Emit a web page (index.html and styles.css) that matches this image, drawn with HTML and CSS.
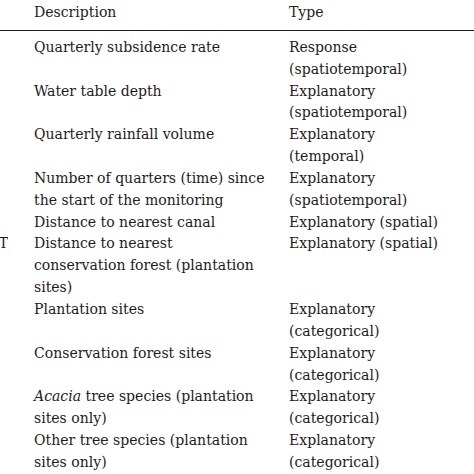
FILE: index.html
```html
<!DOCTYPE html>
<html>
<head>
<meta charset="utf-8">
<link rel="stylesheet" href="styles.css">
</head>
<body>
<div class="table">
  <div class="head">
    <div class="c0"></div>
    <div class="c1">Description</div>
    <div class="c2">Type</div>
  </div>
  <div class="body">
    <div class="c0"></div>
    <div class="c1">Quarterly subsidence rate</div>
    <div class="c2">Response<br>(spatiotemporal)</div>

    <div class="c0"></div>
    <div class="c1">Water table depth</div>
    <div class="c2">Explanatory<br>(spatiotemporal)</div>

    <div class="c0"></div>
    <div class="c1">Quarterly rainfall volume</div>
    <div class="c2">Explanatory<br>(temporal)</div>

    <div class="c0"></div>
    <div class="c1">Number of quarters (time) since<br>the start of the monitoring</div>
    <div class="c2">Explanatory<br>(spatiotemporal)</div>

    <div class="c0"></div>
    <div class="c1">Distance to nearest canal</div>
    <div class="c2">Explanatory (spatial)</div>

    <div class="c0"><span class="clip">T</span></div>
    <div class="c1">Distance to nearest<br>conservation forest (plantation<br>sites)</div>
    <div class="c2">Explanatory (spatial)</div>

    <div class="c0"></div>
    <div class="c1">Plantation sites</div>
    <div class="c2">Explanatory<br>(categorical)</div>

    <div class="c0"></div>
    <div class="c1">Conservation forest sites</div>
    <div class="c2">Explanatory<br>(categorical)</div>

    <div class="c0"></div>
    <div class="c1"><i>Acacia</i> tree species (plantation<br>sites only)</div>
    <div class="c2">Explanatory<br>(categorical)</div>

    <div class="c0"></div>
    <div class="c1">Other tree species (plantation<br>sites only)</div>
    <div class="c2">Explanatory<br>(categorical)</div>
  </div>
</div>
</body>
</html>
```
FILE: styles.css
```css
html, body {
  margin: 0;
  padding: 0;
  background: #ffffff;
}
body {
  font-family: "DejaVu Serif Condensed", "DejaVu Serif", serif;
  font-stretch: condensed;
  font-size: 15.6px;
  line-height: 21.84px;
  color: #1e1b1c;
  width: 474px;
  height: 474px;
  overflow: hidden;
}
.table {
  display: flex;
  flex-direction: column;
}
.head, .body {
  display: grid;
  grid-template-columns: 34px 255px 1fr;
  white-space: nowrap;
}
.head {
  padding-top: 2px;
  padding-bottom: 6px;
  border-bottom: 1.6px solid #1e1b1c;
}
.body {
  padding-top: 6px;
}
.c0 {
  width: 8px;
  display: flex;
  justify-content: flex-end;
  overflow: hidden;
}
.clip {
  flex: none;
}
```
